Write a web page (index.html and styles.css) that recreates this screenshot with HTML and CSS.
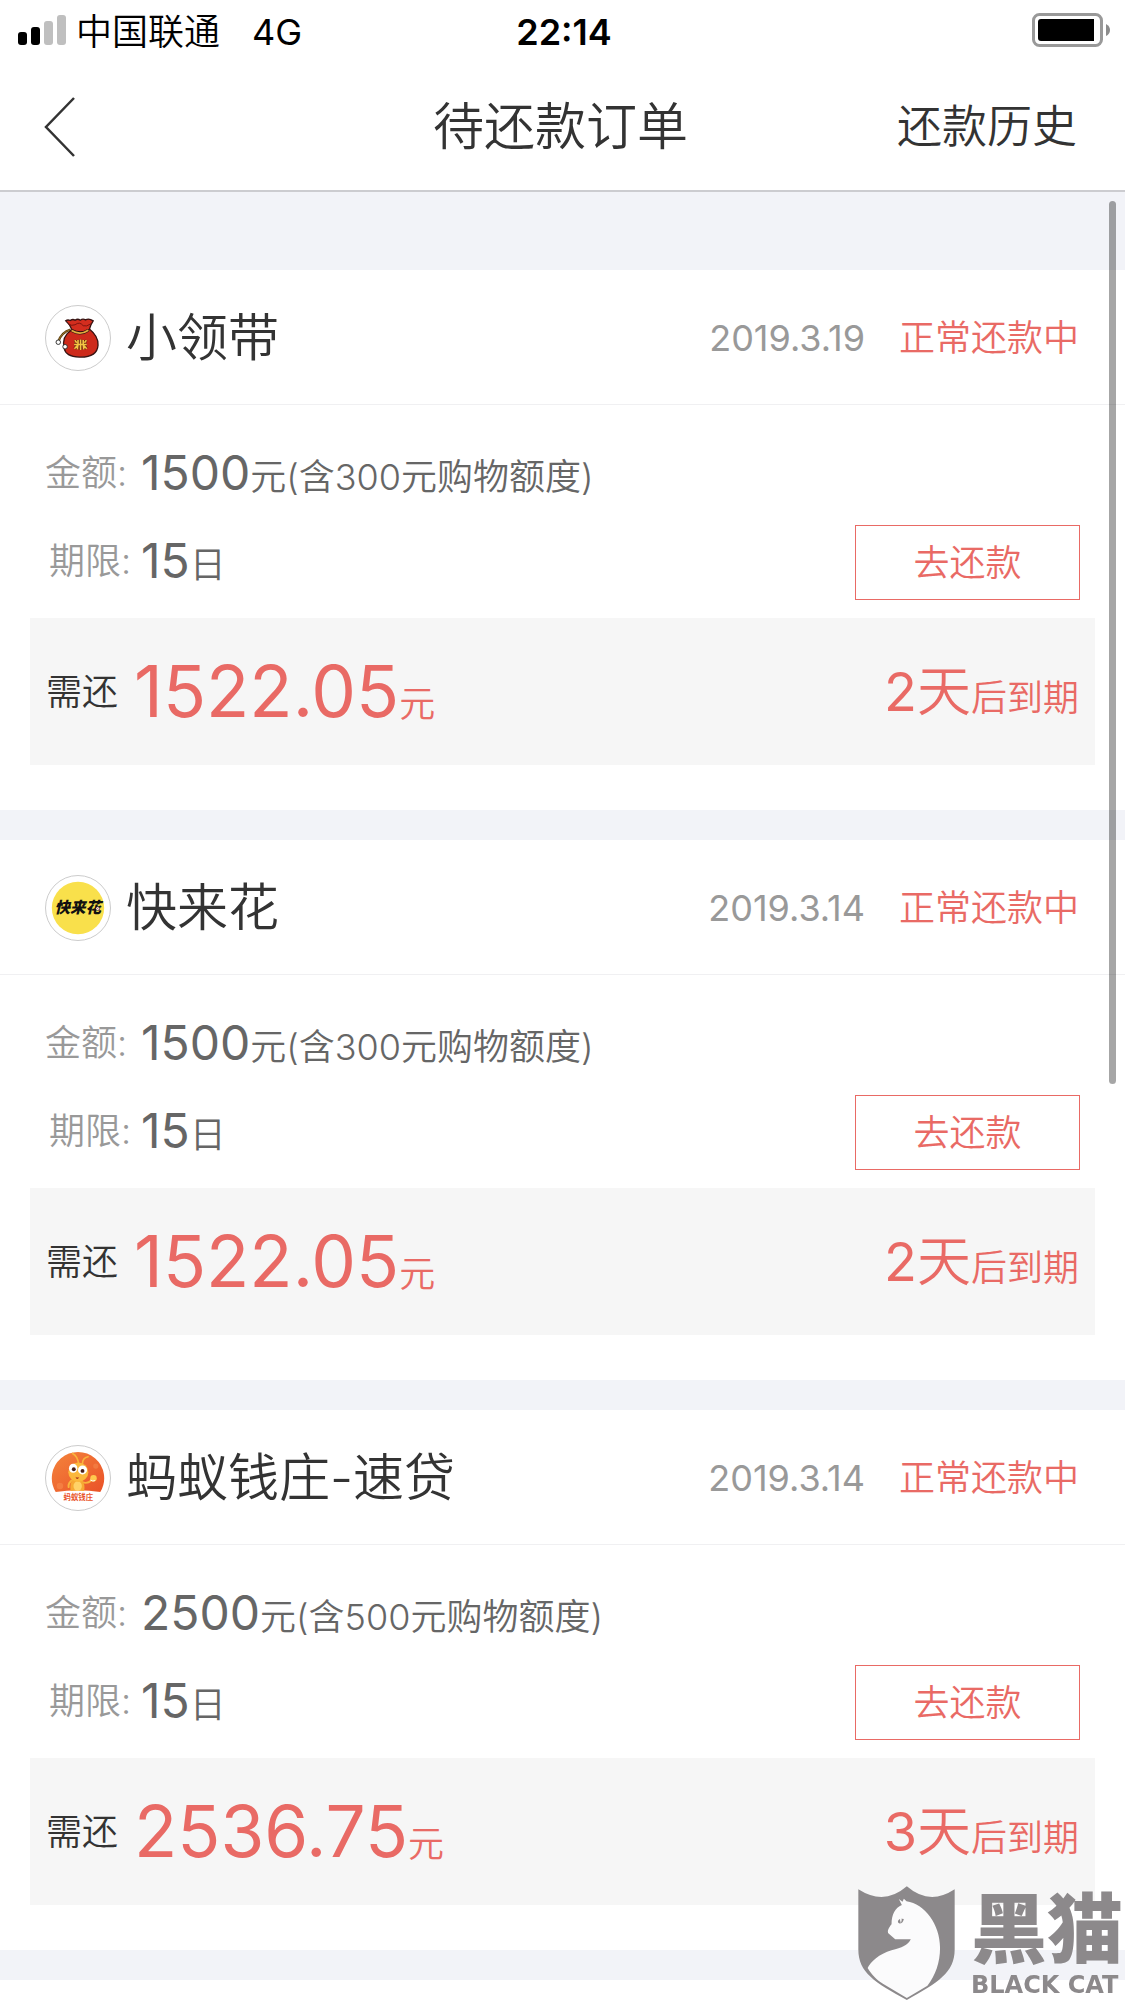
FILE: index.html
```
<!DOCTYPE html>
<html lang="zh-CN">
<head>
    <meta charset="UTF-8">
    <meta name="viewport" content="width=device-width, initial-scale=1.0">
    <title>待还款订单</title>
    <link rel="stylesheet" href="styles.css">
</head>
<body>
    <div class="status-bar">
        <div class="status-left">
            <svg class="signal" viewBox="0 0 48 30">
                <rect x="0" y="17" width="9" height="13" rx="3" fill="#000"/>
                <rect x="13" y="12" width="9" height="18" rx="3" fill="#000"/>
                <rect x="26" y="6" width="9" height="24" rx="3" fill="#bfbfbf"/>
                <rect x="39" y="0" width="9" height="30" rx="3" fill="#bfbfbf"/>
            </svg>
            <span class="carrier">中国联通</span>
            <span class="network">4G</span>
        </div>
        <div class="status-time">22:14</div>
        <div class="status-right">
            <svg class="battery" viewBox="0 0 78 34">
                <rect x="1.5" y="1.5" width="68" height="31" rx="6" fill="none" stroke="#999" stroke-width="3"/>
                <path d="M9 6h53v22H9a3 3 0 0 1-3-3V9a3 3 0 0 1 3-3z" fill="#000"/>
                <path d="M74 11q4 2 4 6t-4 6z" fill="#8c8c8c"/>
            </svg>
        </div>
    </div>

    <header class="navbar">
        <button class="back" aria-label="返回">
            <svg viewBox="0 0 32 60">
                <path d="M30 1L2 30l28 29" fill="none" stroke="#333" stroke-width="2.5"/>
            </svg>
        </button>
        <h1 class="navbar-title">待还款订单</h1>
        <a href="#" class="history-link">还款历史</a>
    </header>

    <main class="orders">
        <section class="order">
            <div class="order-head">
                <div class="logo">
                    <svg viewBox="45 45 198 198">
                        <path d="M121 118q-28 8-38 37M124 120q-13 22-20 50" fill="none" stroke="#5b3d12" stroke-width="7"/>
                        <path d="M121 118q-28 8-38 37M124 120q-13 22-20 50" fill="none" stroke="#b99236" stroke-width="2"/>
                        <path d="M123 120c-19 12-27 32-22 55 3 17 18 27 47 28 36 1 56-9 58-37 1-23-11-37-26-49z" fill="#cd2a1b" stroke="#371312" stroke-width="4"/>
                        <path d="M106 91q6-5 14-1 8-6 15-1 8-6 16 0 8-6 16-1 11-6 24 3-9 13-12 27-28 14-54 0-5-15-19-27z" fill="#d32d1e" stroke="#371312" stroke-width="4"/>
                        <path d="M113 100q12 8 22 3 14-11 25 3 10 4 24-6" fill="none" stroke="#7b150f" stroke-width="3"/>
                        <path d="M124 121q27 16 52-1" fill="none" stroke="#371312" stroke-width="9"/>
                        <path d="M124 121q27 16 52-1" fill="none" stroke="#e2ae3f" stroke-width="5"/>
                        <circle cx="83" cy="157" r="7" fill="#fff" stroke="#333" stroke-width="3"/>
                        <circle cx="104" cy="171" r="7" fill="#fff" stroke="#333" stroke-width="3"/>
                        <path d="M132 164h39M152 149v32M144 150v13l-2 16M160 150v13l2 16M134 151l6 8M170 151l-6 8M141 168l-8 9M163 168l8 9" fill="none" stroke="#5b1c0c" stroke-width="8"/>
                        <path d="M132 164h39M152 149v32M144 150v13l-2 16M160 150v13l2 16M134 151l6 8M170 151l-6 8M141 168l-8 9M163 168l8 9" fill="none" stroke="#f4c544" stroke-width="5"/>
                    </svg>
                </div>
                <h2 class="order-name">小领带</h2>
                <time class="order-date">2019.3.19</time>
                <span class="order-status">正常还款中</span>
            </div>
            <div class="order-body">
                <div class="order-info">
                    <div class="info-row">
                        <span class="info-label">金额:</span>
                        <span class="info-value"><b>1500</b>元(含300元购物额度)</span>
                    </div>
                    <div class="info-row">
                        <span class="info-label info-label-term">期限:</span>
                        <span class="info-value"><b>15</b>日</span>
                    </div>
                </div>
                <button class="repay">去还款</button>
            </div>
            <div class="due">
                <span class="due-label">需还</span>
                <span class="due-amount"><b>1522.05</b>元</span>
                <span class="due-days"><b>2</b><span class="day">天</span>后到期</span>
            </div>
        </section>

        <section class="order">
            <div class="order-head">
                <div class="logo">
                    <svg viewBox="45 45 198 198">
                        <circle cx="144" cy="144" r="81" fill="#f9e04b"/>
                        <text x="143" y="161" class="logo-text-fast">快来花</text>
                        <circle cx="205" cy="146" r="6" fill="#fff" stroke="#111" stroke-width="2"/>
                        <path d="M202 143l6 6M208 143l-6 6" stroke="#d5473c" stroke-width="2"/>
                    </svg>
                </div>
                <h2 class="order-name">快来花</h2>
                <time class="order-date">2019.3.14</time>
                <span class="order-status">正常还款中</span>
            </div>
            <div class="order-body">
                <div class="order-info">
                    <div class="info-row">
                        <span class="info-label">金额:</span>
                        <span class="info-value"><b>1500</b>元(含300元购物额度)</span>
                    </div>
                    <div class="info-row">
                        <span class="info-label info-label-term">期限:</span>
                        <span class="info-value"><b>15</b>日</span>
                    </div>
                </div>
                <button class="repay">去还款</button>
            </div>
            <div class="due">
                <span class="due-label">需还</span>
                <span class="due-amount"><b>1522.05</b>元</span>
                <span class="due-days"><b>2</b><span class="day">天</span>后到期</span>
            </div>
        </section>

        <section class="order">
            <div class="order-head">
                <div class="logo">
                    <svg viewBox="45 45 198 198">
                        <defs>
                            <linearGradient id="antBg" x1="0" y1="0" x2="1" y2="1">
                                <stop offset="0" stop-color="#f4843c"/>
                                <stop offset="1" stop-color="#ea5228"/>
                            </linearGradient>
                        </defs>
                        <path d="M75 187a81 81 0 1 1 138 0q-69-10-138 0z" fill="url(#antBg)"/>
                        <circle cx="88" cy="169" r="10" fill="#f47e42"/>
                        <circle cx="199" cy="107" r="8" fill="#f27a40"/>
                        <path d="M146 100q-4-25-19-32M158 99q0-17 17-21" fill="none" stroke="#f9b43c" stroke-width="5" stroke-linecap="round"/>
                        <path d="M128 150q-15 8-13 22M157 157q16 6 28-5" fill="none" stroke="#f9b43c" stroke-width="6" stroke-linecap="round"/>
                        <path d="M121 184q-3-25 7-34h28q11 12 7 34-22-2-42 0z" fill="#f7a933"/>
                        <ellipse cx="143" cy="169" rx="13" ry="15" fill="#ffd267"/>
                        <ellipse cx="145" cy="126" rx="31" ry="30" fill="#fbb83b"/>
                        <ellipse cx="129" cy="114" rx="13" ry="14" fill="#fff"/>
                        <ellipse cx="158" cy="119" rx="14" ry="14" fill="#fff"/>
                        <circle cx="131" cy="117" r="6" fill="#482019"/>
                        <circle cx="158" cy="122" r="6" fill="#482019"/>
                        <path d="M136 140q7 5 12 1-3 7-8 6z" fill="#a62b16"/>
                        <circle cx="192" cy="145" r="10" fill="#ffc94e"/>
                        <path d="M182 150q8 6 15 2" fill="none" stroke="#fff" stroke-width="3"/>
                        <text x="145" y="213" class="logo-text-ant">蚂蚁钱庄</text>
                    </svg>
                </div>
                <h2 class="order-name">蚂蚁钱庄-速贷</h2>
                <time class="order-date">2019.3.14</time>
                <span class="order-status">正常还款中</span>
            </div>
            <div class="order-body">
                <div class="order-info">
                    <div class="info-row">
                        <span class="info-label">金额:</span>
                        <span class="info-value"><b>2500</b>元(含500元购物额度)</span>
                    </div>
                    <div class="info-row">
                        <span class="info-label info-label-term">期限:</span>
                        <span class="info-value"><b>15</b>日</span>
                    </div>
                </div>
                <button class="repay">去还款</button>
            </div>
            <div class="due">
                <span class="due-label">需还</span>
                <span class="due-amount"><b>2536.75</b>元</span>
                <span class="due-days"><b>3</b><span class="day">天</span>后到期</span>
            </div>
        </section>

        <div class="orders-rest"></div>
    </main>

    <div class="scrollbar"></div>

    <div class="watermark">
        <svg class="watermark-shield" viewBox="48 47 292 346">
            <path d="M49 57q78 50 146-9 68 59 144 9v181c0 70-50 99-144 152C99 337 49 308 49 238z" fill="#8c898b"/>
            <path d="M180 104l-9-18 11 8 4-9 8 8c55 8 101 70 101 140 0 45-14 83-38 114l-62 37-72-43c-18-10-34-27-46-47 8-19 35-43 72-54 32-9 48-13 58-33h-47l-20-17c-5-7 0-17 9-28 0-30 11-49 31-58z" fill="#fbfbfc"/>
            <path d="M168 152q3-8 18-6-3 14-13 14-5-2-5-8z" fill="#8c898b"/>
            <path d="M174 146l3 13 3-12z" fill="#fff"/>
        </svg>
        <div class="watermark-text">
            <span class="watermark-cn">黑猫</span>
            <span class="watermark-en">BLACK CAT</span>
        </div>
    </div>
</body>
</html>
```

FILE: styles.css
```
* {
    box-sizing: border-box;
}

body {
    margin: 0;
    min-height: 100vh;
    display: flex;
    flex-direction: column;
    font-family: Inter, 'Noto Sans CJK SC', sans-serif;
    font-size: 36px;
    font-weight: 350;
    line-height: 48px;
    color: #333;
    background-color: #fff;
}

h1,
h2 {
    margin: 0;
    font-weight: 350;
}

b {
    font-weight: 400;
}

button {
    padding: 0;
    font: inherit;
    background: none;
    cursor: pointer;
}

/* Status bar */
.status-bar {
    height: 60px;
    padding: 0 15px 0 18px;
    display: grid;
    grid-template-columns: 1fr auto 1fr;
    align-items: center;
    color: #000;
}

.status-left {
    display: flex;
    align-items: center;
}

.signal {
    width: 48px;
    height: 30px;
    margin-right: 10px;
}

.carrier,
.network,
.status-time {
    padding-top: 3px;
}

.network {
    margin-left: 32px;
    font-weight: 400;
}

.status-time {
    font-weight: 600;
}

.status-right {
    display: flex;
    justify-content: flex-end;
}

.battery {
    width: 78px;
    height: 34px;
}

/* Navigation */
.navbar {
    height: 132px;
    padding: 4px 48px 0 44px;
    display: grid;
    grid-template-columns: 1fr auto 1fr;
    align-items: center;
    border-bottom: 2px solid #ccccd0;
}

.back {
    width: 32px;
    height: 60px;
    border: none;
}

.back svg {
    display: block;
    width: 32px;
    height: 60px;
}

.navbar-title {
    font-size: 51px;
    line-height: 72px;
}

.history-link {
    justify-self: end;
    font-size: 45px;
    color: #333;
    text-decoration: none;
}

/* Orders */
.orders {
    flex: 1;
    display: flex;
    flex-direction: column;
    gap: 30px;
    padding-top: 78px;
    background-color: #f2f3f8;
}

.order {
    padding-bottom: 45px;
    background-color: #fff;
}

.order-head {
    height: 135px;
    padding: 2px 46px 0 45px;
    display: flex;
    align-items: center;
    border-bottom: 1px solid #f0f0f2;
}

.logo {
    width: 66px;
    height: 66px;
    margin-right: 15px;
    border: 1px solid #ccc;
    border-radius: 50%;
    overflow: hidden;
}

.logo svg {
    display: block;
}

.logo-text-fast {
    font-size: 48px;
    font-weight: 900;
    font-style: italic;
    text-anchor: middle;
    fill: #111;
}

.logo-text-ant {
    font-size: 23px;
    font-weight: 700;
    text-anchor: middle;
    fill: #e9532a;
}

.order-name {
    font-size: 51px;
    line-height: 72px;
}

.order-date {
    margin-left: auto;
    margin-right: 34px;
    font-weight: 400;
    color: #999;
}

.order-status {
    color: #e96a65;
}

.order-body {
    height: 213px;
    padding: 24px 45px 18px;
    display: flex;
    justify-content: space-between;
    align-items: flex-end;
}

.order-info {
    align-self: flex-start;
}

.info-row {
    height: 88px;
    display: flex;
    align-items: center;
}

.info-label {
    width: 96px;
    color: #999;
}

.info-label-term {
    padding-left: 4px;
}

.info-value {
    padding-top: 4px;
    color: #666;
}

.info-value b {
    font-size: 48px;
}

.repay {
    width: 225px;
    height: 75px;
    border: 1px solid #e96a65;
    color: #e96a65;
}

.due {
    height: 147px;
    margin: 0 30px;
    padding: 0 16px;
    display: flex;
    align-items: center;
    background-color: #f6f6f6;
}

.due-amount,
.due-days {
    line-height: 72px;
    color: #e96a65;
}

.due-amount {
    margin-left: 16px;
    padding-top: 12px;
}

.due-amount b {
    font-size: 71px;
}

.due-days {
    margin-left: auto;
    padding-top: 6px;
}

.due-days b,
.day {
    font-size: 54px;
}

.orders-rest {
    flex: 1;
    background-color: #fff;
}

.scrollbar {
    position: absolute;
    top: 201px;
    right: 9px;
    width: 7px;
    height: 883px;
    border-radius: 4px;
    background-color: rgba(0, 0, 0, 0.35);
}

/* Watermark */
.watermark {
    position: fixed;
    right: 2px;
    bottom: 0;
    display: flex;
    align-items: flex-end;
    gap: 16px;
    color: #8c898b;
}

.watermark-shield {
    width: 97px;
    height: 115px;
}

.watermark-text {
    display: flex;
    flex-direction: column;
}

.watermark-cn {
    font-size: 76px;
    font-weight: 900;
    line-height: 80px;
}

.watermark-en {
    font-family: 'DejaVu Sans', sans-serif;
    font-size: 24px;
    font-weight: 700;
    line-height: 32px;
}
```
